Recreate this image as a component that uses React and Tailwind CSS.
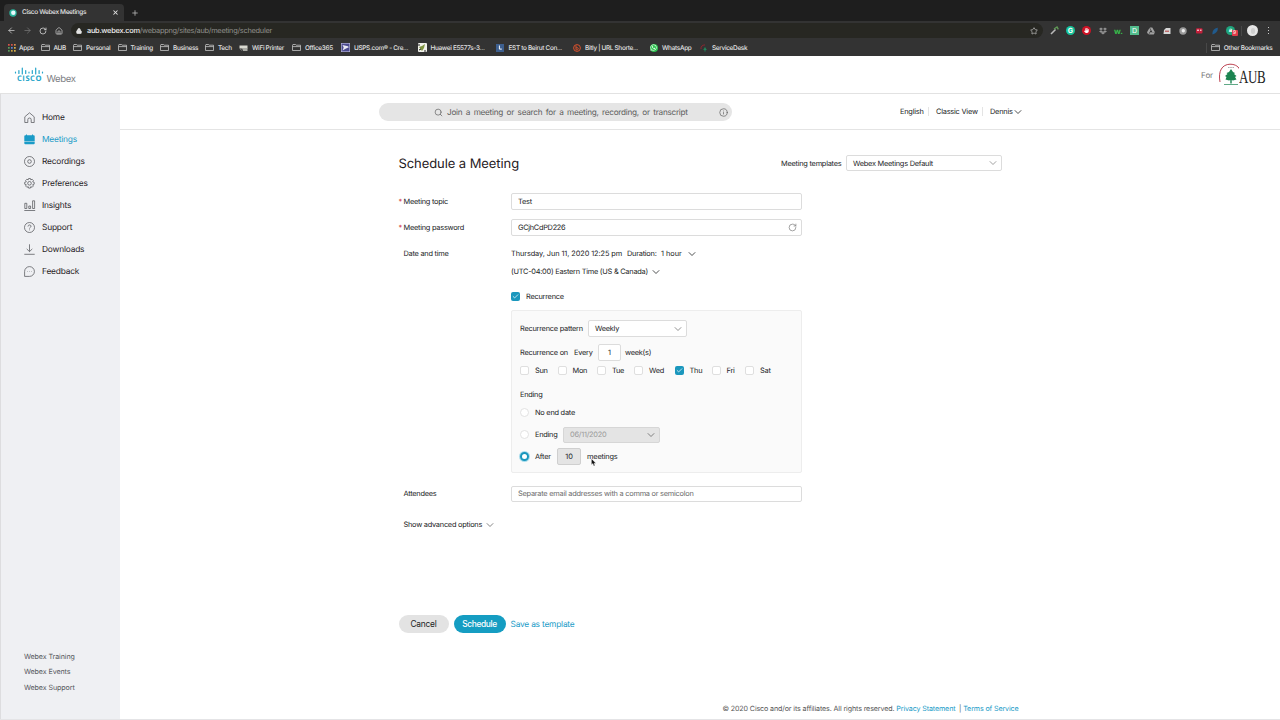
import { ArrowLeft, ArrowRight, Check, House, Info, Lock, Plus, RotateCw, Search, Star, X } from 'lucide-react'
import { FaWhatsapp, FaDropbox, FaGoogleDrive, FaHand } from 'react-icons/fa6'

const bookmarks = [
  { label: 'Apps', icon: 'apps', w: 'w-[33.5px]' },
  { label: 'AUB', icon: 'folder', w: 'w-[32.5px]' },
  { label: 'Personal', icon: 'folder', w: 'w-[44.5px]' },
  { label: 'Training', icon: 'folder', w: 'w-[42.5px]' },
  { label: 'Business', icon: 'folder', w: 'w-[45px]' },
  { label: 'Tech', icon: 'folder', w: 'w-[34px]' },
  { label: 'WiFi Printer', icon: 'printer', w: 'w-[53px]' },
  { label: 'Office365', icon: 'folder', w: 'w-[49px]' },
  { label: 'USPS.com® - Cre...', icon: 'usps', w: 'w-[76.5px]' },
  { label: 'Huawei E5577s-3...', icon: 'huawei', w: 'w-[78px]' },
  { label: 'EST to Beirut Con...', icon: 'est', w: 'w-[76.5px]' },
  { label: 'Bitly | URL Shorte...', icon: 'bitly', w: 'w-[77px]' },
  { label: 'WhatsApp', icon: 'whatsapp', w: 'w-[50px]' },
  { label: 'ServiceDesk', icon: 'service', w: 'w-[60px]' },
]

const navItems = ['Home', 'Meetings', 'Recordings', 'Preferences', 'Insights', 'Support', 'Downloads', 'Feedback']

const days = [
  { label: 'Sun', w: 'w-[37.5px]' },
  { label: 'Mon', w: 'w-[39.5px]' },
  { label: 'Tue', w: 'w-[37px]' },
  { label: 'Wed', w: 'w-[40.5px]' },
  { label: 'Thu', w: 'w-[37px]', checked: true },
  { label: 'Fri', w: 'w-[33.5px]' },
  { label: 'Sat', w: 'w-[30px]' },
]

function FolderIcon() {
  return (
    <svg viewBox="0 0 9 7" className="w-[9px] h-[7px]" fill="none" stroke="#c4c4c4" strokeWidth="0.8">
      <path d="M.5 1.2V6.5h8V1.2H4.2L3.6.5H.9z M.5 2.6h8" />
    </svg>
  )
}

function Chevron({ className = '' }) {
  return (
    <svg viewBox="0 0 8 8" className={`size-2 shrink-0 ${className}`} fill="none" stroke="currentColor" strokeWidth="0.8">
      <path d="M.8 2.300l3.200 3.200 3.200-3.200" />
    </svg>
  )
}

function BookmarkIcon({ name }) {
  switch (name) {
    case 'folder':
      return <FolderIcon />
    case 'apps':
      return (
        <svg viewBox="0 0 8 8" className="w-2 h-2">
          {['#d9534b', '#d9534b', '#d98a4b', '#5a9c5a', '#5b86d6', '#d9b04b', '#5a9c5a', '#c9a13f', '#d9b04b'].map((c, i) => (
            <rect key={i} x={(i % 3) * 3} y={Math.floor(i / 3) * 3} width="1.7" height="1.7" fill={c} />
          ))}
        </svg>
      )
    case 'printer':
      return (
        <svg viewBox="0 0 9 8" className="w-[9px] h-2">
          <path d="M.5 1.5h8v3h-8z" fill="#d8d8d0" />
          <path d="M3 4h5.5v3H4z" fill="#a9aaa4" />
          <path d="M1 5l2 1.5" stroke="#777" />
        </svg>
      )
    case 'usps':
      return (
        <svg viewBox="0 0 9 9" className="w-[9px] h-[9px]">
          <rect width="9" height="9" fill="#b9b9dc" />
          <rect x=".6" y=".6" width="7.8" height="7.8" fill="#4b4a8f" />
          <path d="M1.500 2l5.500 1.200.8 1L5 5.400 1.500 7.500l1.200-3z" fill="#e9e9f4" />
        </svg>
      )
    case 'huawei':
      return (
        <svg viewBox="0 0 9 9" className="w-[9px] h-[9px]">
          <rect width="9" height="9" rx="1" fill="#f2f2ec" />
          <path d="M1 4l3-1 3-2-1 4-2 3z" fill="#7f9440" />
          <path d="M0 2h2M1 7l2-1M7 7v2" stroke="#222" />
        </svg>
      )
    case 'est':
      return (
        <svg viewBox="0 0 8 8" className="w-2 h-2">
          <rect width="8" height="8" fill="#3d5f8f" />
          <path d="M3.4 1.5v3.6h2.4" stroke="#fff" fill="none" />
        </svg>
      )
    case 'bitly':
      return (
        <svg viewBox="0 0 8 8" className="w-2 h-2" fill="none" stroke="#d8512d" strokeWidth="1">
          <circle cx="4" cy="4" r="3.4" />
          <path d="M3 1.5v4.2M3 4c1-1 2.6-.2 2.2 1-.4 1.1-1.7 1-2.2.6" />
        </svg>
      )
    case 'whatsapp':
      return (
        <span className="flex size-[8px] items-center justify-center rounded-full bg-[#2fc351]">
          <FaWhatsapp className="size-[7px] text-white" />
        </span>
      )
    default:
      return (
        <svg viewBox="0 0 8 8" className="w-2 h-2" fill="none">
          <path d="M1 5C.7 2.4 2.4 1 5 .9" stroke="#8c2630" />
          <path d="M5 3l1.8 3H3.2z" fill="#21865c" />
          <path d="M5 6v1.5" stroke="#21865c" />
        </svg>
      )
  }
}

function Extensions() {
  return (
    <div className="flex items-center">
      <span className="flex w-4 justify-center">
        <svg viewBox="0 0 9 9" className="size-[9px]">
          <path d="M1 8l4.5-4.5" stroke="#b9b9b9" strokeWidth="1.6" />
          <path d="M4 3l3-2 1.3 2.4" stroke="#5f9a55" strokeWidth="1.4" fill="none" />
        </svg>
      </span>
      <span className="flex w-4 justify-center">
        <span className="flex size-[9px] items-center justify-center rounded-full bg-[#15c39a] text-[7px] font-bold leading-none text-white">G</span>
      </span>
      <span className="flex w-4 justify-center">
        <span className="flex size-[9px] items-center justify-center rounded-full bg-[#cf1225]">
          <FaHand className="size-[5px] text-white" />
        </span>
      </span>
      <span className="flex w-4 justify-center"><FaDropbox className="size-2 text-[#929292]" /></span>
      <span className="flex w-4 justify-center text-[8px] font-bold leading-none text-[#38c14c]">w.</span>
      <span className="flex w-4 justify-center">
        <span className="flex size-[9px] items-center justify-center bg-[#53bd8d] text-[7px] leading-none text-white">D</span>
      </span>
      <span className="flex w-4 justify-center"><FaGoogleDrive className="size-2 text-[#a2a2a2]" /></span>
      <span className="flex w-4 justify-center">
        <svg viewBox="0 0 8 8" className="size-2">
          <path d="M1 3l2-2h4.5v6H.5z" fill="#d6d6d6" />
          <path d="M2 4.2h4" stroke="#b33b3b" />
        </svg>
      </span>
      <span className="flex w-4 justify-center">
        <svg viewBox="0 0 8 8" className="size-2">
          <circle cx="4" cy="4" r="3.7" fill="#9a9a9a" />
          <circle cx="4.3" cy="3.8" r="1.7" fill="#eee" />
        </svg>
      </span>
      <span className="flex w-4 justify-center">
        <svg viewBox="0 0 8 8" className="size-2">
          <rect x="1" y="1.2" width="6.5" height="5.4" rx="1" fill="#c31f3a" />
          <path d="M2 3.2h2M5 3.2h1.5" stroke="#fff" />
        </svg>
      </span>
      <span className="flex w-4 justify-center">
        <svg viewBox="0 0 8 8" className="size-2">
          <path d="M1.5 7.5C1 4 3 1.5 6.8.8 7 4.5 5 6.5 1.5 7.5z" fill="#215a8c" />
        </svg>
      </span>
      <span className="relative flex w-4 justify-center">
        <span className="flex size-[9px] items-center justify-center rounded-full bg-[#1fa67e] text-[6px] font-bold leading-none text-white">a</span>
        <span className="absolute left-[9px] top-[4px] flex size-[6px] items-center justify-center rounded-[1px] bg-[#e03c4a] text-[5px] leading-none text-white">9</span>
      </span>
    </div>
  )
}

function Browser() {
  return (
    <div className="h-14 shrink-0 bg-[#333333] text-[#e4e4e4]">
      <div className="flex h-[21px] items-end bg-[#1e1e1e] pl-1">
        <div className="flex h-[17px] w-[120px] items-center rounded-t-[4px] bg-[#333333] pl-[5px] pr-[5px]">
          <svg viewBox="0 0 8 8" className="size-2">
            <circle cx="4" cy="4" r="3.7" fill="#2bb39c" />
            <circle cx="4.3" cy="3.8" r="2.2" fill="#e8fbff" />
          </svg>
          <span className="ml-[5px] flex-1 whitespace-nowrap pt-px text-[6.5px] font-medium tracking-[-0.36px]">Cisco Webex Meetings</span>
          <X className="size-[7px]" strokeWidth={3.5} />
        </div>
        <Plus className="mb-[4px] ml-[7px] size-2 text-[#b5b5b5]" strokeWidth={2.5} />
      </div>

      {/* Address bar */}
      <div className="flex h-[19px] items-center pl-[7px]">
        <ArrowLeft className="size-[9px] text-[#cccccc]" />
        <ArrowRight className="ml-[7px] size-[9px] text-[#777777]" />
        <RotateCw className="ml-[7px] size-[8px] text-[#cccccc]" strokeWidth={2.5} />
        <House className="ml-[8px] size-[8px] text-[#cccccc]" strokeWidth={2.2} />
        <div className="ml-[8px] flex h-[15px] w-[972px] items-center rounded-full bg-[#272722] pl-[5px] pr-[5px]">
          <Lock className="size-[6px]" fill="#e4e4e4" strokeWidth={3} />
          <span className="ml-[5px] flex-1 text-[7.4px] tracking-[-0.27px] text-[#8f8f8b]">
            <span className="font-medium text-[#f0f0f0]">aub.webex.com</span>/webappng/sites/aub/meeting/scheduler
          </span>
          <Star className="size-2 text-[#cccccc]" />
        </div>
        <div className="ml-[3.5px]"><Extensions /></div>
        <div className="ml-[2px] h-[10px] w-px bg-[#484848]" />
        <div className="ml-[5.5px] flex size-[11px] items-center justify-center rounded-full bg-[#e6e6e6]">
          <span className="h-[6px] w-[4px] rounded-full bg-[#cfcfcf]" />
        </div>
        <div className="ml-[10px] flex flex-col gap-[2px]">
          <i className="size-px bg-[#cccccc]" />
          <i className="size-px bg-[#cccccc]" />
          <i className="size-px bg-[#cccccc]" />
        </div>
      </div>

      {/* Bookmarks */}
      <div className="flex h-4 items-center pl-[7px] text-[6.4px] font-medium tracking-[-0.3px]">
        {bookmarks.map((b) => (
          <div key={b.label} className={`flex shrink-0 items-center whitespace-nowrap ${b.w}`}>
            <span className="flex w-[9px] shrink-0 justify-center"><BookmarkIcon name={b.icon} /></span>
            <span className={b.icon === 'apps' ? 'ml-[3px] pt-px' : 'ml-[4px] pt-px'}>{b.label}</span>
          </div>
        ))}
        <div className="ml-auto flex items-center border-l border-[#484848] pl-[4px] pr-[7.5px]">
          <FolderIcon />
          <span className="ml-[4px] whitespace-nowrap pt-px">Other Bookmarks</span>
        </div>
      </div>
    </div>
  )
}

function Logos() {
  return (
    <header className="flex h-[38px] shrink-0 items-center justify-between border-b border-[#e2e2e2] pl-[14px] pr-[14px]">
      <div className="flex items-end pt-[2px]">
        <div className="flex flex-col items-center">
          <svg viewBox="0 0 30 8" className="h-2 w-[30px]" stroke="#27a5c9" strokeWidth="1.2" strokeLinecap="round">
            <path d="M1.5 5.2v.8M4.9 3.5v3M8.3 1v6M11.7 3.5v3M15 5.2v.8M18.3 3.5v3M21.7 1v6M25.1 3.5v3M28.5 5.2v.8" />
          </svg>
          <span className="pl-px font-['Open_Sans',sans-serif] text-[7.6px] font-bold leading-[9px] tracking-[0.5px] text-[#27a5c9]">CISCO</span>
        </div>
        <span className="ml-[2.5px] text-[9.6px] leading-[8px] tracking-[-0.36px] text-[#7d8084]">Webex</span>
      </div>
      <div className="flex items-center">
        <span className="text-[8px] tracking-[-0.1px] text-[#777777]">For</span>
        <div className="ml-[6px] flex items-end">
          <svg viewBox="0 0 20 23" className="h-[23px] w-[20px]" fill="none">
            <path d="M1 19C-1 8 3 1.5 11 1.200c6 0 9 3 10 6" stroke="#b42c3d" strokeWidth="0.9" />
            <path d="M9 4.500h6" stroke="#999" strokeWidth="0.8" strokeDasharray="1.2 .4" />
            <path d="M12 6l2 3 2 1-1 1 2.500 2-1.500 1 1.500 2.500-3.500 1-1.300-.5v3.500h-1.400V17l-1.300.5-3.500-1L7.500 14 6 13l2.500-2-1-1 2.500-1z" fill="#1b8451" />
            <path d="M5 21.500h14" stroke="#1b8451" strokeWidth="0.7" />
          </svg>
          <span className="-mb-[3px] w-[27px] origin-left scale-x-[0.7] font-['Liberation_Serif',serif] text-[18.500px] leading-[22px] tracking-[-0.5px] text-[#222222]">AUB</span>
        </div>
      </div>
    </header>
  )
}

function NavIcon({ name }) {
  const paths = {
    Home: <path d="M.8 4.800L5.500.8l4.700 4v5.700H7.200V7.700a1.700 1.700 0 0 0-3.400 0v2.800h-3z" />,
    Meetings: (
      <g fill="#1a9bc7" stroke="none">
        <path d="M.3 2.200a1 1 0 0 1 1-1H2V.5h1v.7h5V.5h1v.7h.700a1 1 0 0 1 1 1v5.300H.3z" />
        <path d="M.3 8.100h10.400v1.200a1 1 0 0 1-1 1H1.300a1 1 0 0 1-1-1z" />
      </g>
    ),
    Recordings: (
      <>
        <circle cx="5.500" cy="5.500" r="5" />
        <circle cx="5.500" cy="5.500" r="1.800" />
      </>
    ),
    Preferences: (
      <>
        <path d="M4.600.5h1.800l.4 1.400 1.300-.7 1.300 1.300-.7 1.300 1.500.5v1.900l-1.500.5.7 1.300-1.300 1.300-1.300-.7-.4 1.500H4.600l-.4-1.500-1.300.7L1.600 8l.7-1.300L.7 6.200V4.300l1.600-.5-.7-1.300 1.300-1.300 1.300.7z" />
        <circle cx="5.500" cy="5.300" r="1.800" />
      </>
    ),
    Insights: <path d="M.3 10.500h10.900M.8 3.300h2v5.200h-2zM4.800 6h1.800v2.500H4.800zM8.600.8h2v7.700h-2z" />,
    Support: (
      <>
        <circle cx="5.500" cy="5.500" r="5" />
        <path d="M4 4.500c0-2 3-2 3-.2 0 1.200-1.500 1-1.500 2.200M5.500 7.500v.8" />
      </>
    ),
    Downloads: <path d="M5.500.3v7.200M2.700 4.900l2.800 2.700 2.800-2.700M.3 10.300h10.400" />,
    Feedback: (
      <>
        <path d="M.6 10.400V5.500a4.900 4.900 0 1 1 4.900 4.900z" />
        <path d="M3.300 5.500h.7M5.200 5.500h.7M7.100 5.500h.7" strokeWidth="0.4" />
      </>
    ),
  }
  return (
    <svg viewBox="0 0 11 11" className="size-[11px] shrink-0 overflow-visible" fill="none" stroke="#4a4c50" strokeWidth="0.7">
      {paths[name]}
    </svg>
  )
}

function Sidebar() {
  return (
    <aside className="flex w-[120px] shrink-0 flex-col border-l border-[#dddddf] bg-[#eff0f3] pt-3">
      <nav>
        {navItems.map((item) => (
          <a key={item} className={`flex h-[22px] items-center gap-[7px] pl-[23px] text-[8.4px] tracking-[-0.2px] ${item === 'Meetings' ? 'text-[#1a9bc7]' : 'text-[#1f2023]'}`}>
            <NavIcon name={item} />
            <span className="pt-[2px]">{item}</span>
          </a>
        ))}
      </nav>
      <div className="mb-[24px] mt-auto pl-[23px] text-[7.1px] leading-[15.3px] tracking-[-0.08px] text-[#55575b]">
        <div>Webex Training</div>
        <div>Webex Events</div>
        <div>Webex Support</div>
      </div>
    </aside>
  )
}

function Checkbox({ checked }) {
  return (
    <span className={`flex size-[9px] shrink-0 items-center justify-center rounded-[2px] ${checked ? 'bg-[#1a97bd]' : 'border border-[#dfdfdf] bg-white'}`}>
      {checked && <Check className="size-[7px] text-white" strokeWidth={2.500} />}
    </span>
  )
}

function Radio({ checked }) {
  return checked ? (
    <span className="size-[9px] shrink-0 rounded-full border-[2.500px] border-[#1a97bd] bg-white shadow-[0_0_0_1px_#a9dcec]" />
  ) : (
    <span className="size-[9px] shrink-0 rounded-full border border-[#e2e2e2] bg-white" />
  )
}

function Row({ label, required, className, children }) {
  return (
    <div className={`flex h-[17px] items-center ${className}`}>
      <div className="w-[113px] shrink-0 pl-[0.5px] pt-px">
        <span className="inline-block w-[5px] text-[#d0303a]">{required ? '*' : ''}</span>
        {label}
      </div>
      {children}
    </div>
  )
}

function Recurrence() {
  return (
    <div className="ml-[113px] mt-[5px] h-[163px] w-[290.5px] rounded-[2px] border border-[#ededed] bg-[#fafafa] pl-2 pt-[9px]">
      <div className="flex h-[17px] items-center">
        <span className="w-[68px] pt-px">Recurrence pattern</span>
        <div className="flex h-full w-[99px] items-center justify-between rounded-[2px] border border-[#dcdcdc] bg-white pl-[6px] pr-1 pt-px">
          Weekly
          <Chevron className="text-[#777777]" />
        </div>
      </div>
      <div className="mt-[7px] flex h-[17px] items-center">
        <span className="w-[54px] pt-px">Recurrence on</span>
        <span className="w-[24px] pt-px">Every</span>
        <div className="flex h-full w-[23px] items-center justify-center rounded-[2px] border border-[#dcdcdc] bg-white pt-px">1</div>
        <span className="ml-[4px] pt-px">week(s)</span>
      </div>
      <div className="mt-[3px] flex h-[13px] items-center">
        {days.map((d) => (
          <div key={d.label} className={`flex shrink-0 items-center gap-[6px] ${d.w}`}>
            <Checkbox checked={d.checked} />
            <span className="pt-px">{d.label}</span>
          </div>
        ))}
      </div>
      <div className="mt-[11px] flex h-[13px] items-center pt-px">Ending</div>
      <div className="mt-[5px] flex h-[13px] items-center gap-[6px]">
        <Radio />
        <span className="pt-px">No end date</span>
      </div>
      <div className="mt-[7px] flex h-[17px] items-center">
        <Radio />
        <span className="ml-[6px] w-[28px] pt-px">Ending</span>
        <div className="flex h-4 w-[97px] items-center justify-between rounded-[2px] border border-[#d6d6d6] bg-[#e4e4e4] pl-[6px] pr-1 text-[#999999]">
          <span className="pt-px">06/11/2020</span>
          <Chevron className="text-[#666666]" />
        </div>
      </div>
      <div className="mt-[5px] flex h-[17px] items-center">
        <Radio checked />
        <span className="ml-[6px] w-[22px] pt-px">After</span>
        <div className="flex h-full w-[24px] items-center justify-center rounded-[2px] border border-[#cfcfcf] bg-[#e4e4e4] pt-px tracking-normal">10</div>
        <span className="relative ml-[6px] pt-px tracking-[-0.2px]">
          meetings
          <svg viewBox="0 0 7 10" className="absolute left-[4px] top-[8px] h-[9px] w-[6px]">
            <path d="M.5.5v7.200l1.700-1.500 1.100 2.800 1.300-.6-1.100-2.600h2.200z" fill="#111" stroke="#fff" strokeWidth="0.4" />
          </svg>
        </span>
      </div>
    </div>
  )
}

function ScheduleForm() {
  return (
    <div className="pl-[278px] pt-[23px] text-[7.4px] tracking-[-0.25px] text-[#222325]">
      <div className="flex h-5 items-center">
        <h1 className="w-[383px] pl-[0.5px] pt-[3px] text-[13px] tracking-[-0.08px] text-[#1f2023]">Schedule a Meeting</h1>
        <span className="w-[65px] whitespace-nowrap pt-px">Meeting templates</span>
        <div className="flex h-4 w-[156px] items-center justify-between rounded-[2px] border border-[#dcdcdc] pl-[6px] pr-1">
          <span className="pt-px">Webex Meetings Default</span>
          <Chevron className="text-[#888888]" />
        </div>
      </div>

      <Row label="Meeting topic" required className="mt-5">
        <div className="flex h-full w-[291px] items-center rounded-[2px] border border-[#dcdcdc] pl-[6px]">Test</div>
      </Row>
      <Row label="Meeting password" required className="mt-[9px]">
        <div className="flex h-full w-[291px] items-center justify-between rounded-[2px] border border-[#dcdcdc] pl-[6px] pr-1">
          <span className="pt-px tracking-[-0.3px]">GCjhCdPD226</span>
          <RotateCw className="size-[9px] text-[#777777]" strokeWidth={1.800} />
        </div>
      </Row>
      <Row label="Date and time" className="mt-[9px]">
        <span className="w-[116px] whitespace-nowrap pt-px tracking-[-0.1px]">Thursday, Jun 11, 2020 12:25 pm</span>
        <span className="w-[34px]">Duration:</span>
        <span className="w-[27px] tracking-[-0.05px]">1 hour</span>
        <Chevron />
      </Row>
      <Row className="mt-px">
        <span className="w-[140.5px] whitespace-nowrap pt-px">(UTC-04:00) Eastern Time (US & Canada)</span>
        <Chevron />
      </Row>
      <Row className="mt-2">
        <Checkbox checked />
        <span className="ml-[6px] pt-px">Recurrence</span>
      </Row>

      <Recurrence />

      <Row label="Attendees" className="mt-3">
        <div className="flex h-4 w-[291px] items-center rounded-[2px] border border-[#dcdcdc] pl-[6px] text-[#6c6c6c]">
          <span className="pt-px">Separate email addresses with a comma or semicolon</span>
        </div>
      </Row>
      <div className="mt-[14px] flex h-[17px] items-center pl-[5.5px] pt-px">
        <span className="w-[82.5px] whitespace-nowrap">Show advanced options</span>
        <Chevron className="text-[#666666]" />
      </div>

      <div className="mt-[82px] flex h-[18px] items-center pl-[0.5px] text-[8.4px] tracking-[-0.22px]">
        <button className="h-full w-[50px] rounded-full bg-[#e3e3e3] pt-px">Cancel</button>
        <button className="ml-[5px] h-full w-[52px] rounded-full bg-[#159dc2] pt-px font-medium tracking-[-0.38px] text-white">Schedule</button>
        <a className="ml-[5px] pt-[2px] text-[#1a9bc7]">Save as template</a>
      </div>
    </div>
  )
}

export default function App() {
  return (
    <div className="flex h-[720px] w-[1280px] flex-col overflow-hidden bg-white font-[Inter,sans-serif] [text-rendering:geometricPrecision]">
      <Browser />
      <Logos />
      <div className="flex flex-1 border-b border-[#e4e4e6]">
        <Sidebar />
        <main className="flex flex-1 flex-col">
          <div className="flex h-9 shrink-0 items-center border-b border-[#e4e4e4] pl-[259px] text-[7.4px] tracking-[-0.22px] text-[#222325]">
            <div className="flex h-[18px] w-[353px] items-center rounded-full bg-[#e5e5e5] pl-[55px] pr-[4px] pt-px text-[8.2px] text-[#5c5c5c]">
              <Search className="size-[9px]" strokeWidth={1.800} />
              <span className="ml-[4px] flex-1 whitespace-nowrap tracking-[-0.27px] [word-spacing:1.5px]">
                Join a meeting or search for a meeting, recording, or transcript
              </span>
              <Info className="size-[9px]" strokeWidth={1.800} />
            </div>
            <span className="ml-[168px] w-[28px]">English</span>
            <span className="h-[9px] border-l border-[#e4e4e4] pr-[7px]" />
            <span className="w-[46px] whitespace-nowrap">Classic View</span>
            <span className="h-[9px] border-l border-[#e4e4e4] pr-[7px]" />
            <span className="w-[24px]">Dennis</span>
            <Chevron />
          </div>

          <ScheduleForm />

          <footer className="mb-[4px] mt-auto pl-[602.5px] text-[7.1px] leading-3 tracking-[-0.11px] text-[#555555]">
            © 2020 Cisco and/or its affiliates. All rights reserved. <a className="text-[#1a9bc7]">Privacy Statement</a>
            <span className="ml-[3.5px] mr-[2px]">|</span>
            <a className="text-[#1a9bc7]">Terms of Service</a>
          </footer>
        </main>
      </div>
    </div>
  )
}
